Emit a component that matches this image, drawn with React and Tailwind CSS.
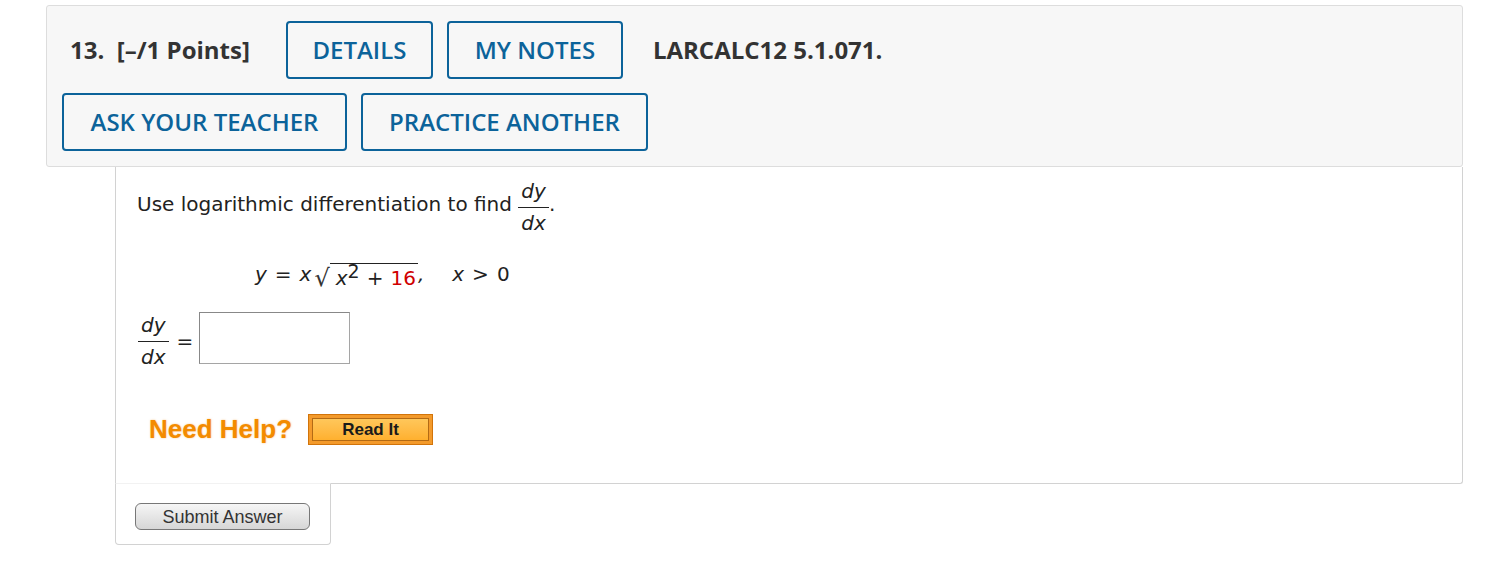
import React from 'react';

const Frac = ({ top, bottom, className = '' }) => (
  <span className={`inline-flex flex-col items-center italic ${className}`}>
    <span className="leading-[24px] pb-[4px] px-[3px]">{top}</span>
    <span className="block w-full h-px bg-[#222]"></span>
    <span className="leading-[24px] pt-[3px] px-[3px]">{bottom}</span>
  </span>
);

const BlueButton = ({ label, width }) => (
  <button
    className={`h-[58px] ${width} rounded-[4px] border-2 border-[#0c639a] bg-transparent text-[#0c639a] text-[24px] font-semibold`}
    style={{ fontFamily: '"Open Sans", sans-serif' }}
  >
    {label}
  </button>
);

const App = () => {
  return (
    <div className="w-[1488px] h-[562px] bg-white pt-[5px] pl-[46px]">
      {/* question header */}
      <div
        className="w-[1417px] h-[162px] bg-[#f7f7f7] border border-[#dddddd] rounded-[3px] pt-[15px] pl-[15px]"
        style={{ fontFamily: '"Open Sans", sans-serif' }}
      >
        <div className="flex items-center">
          <span className="ml-[8px] text-[24px] font-bold text-[#333] whitespace-pre">13.  [–/1 Points]</span>
          <div className="ml-[36px] flex gap-[14px]">
            <BlueButton label="DETAILS" width="w-[147px]" />
            <BlueButton label="MY NOTES" width="w-[176px]" />
          </div>
          <span className="ml-[30px] text-[24px] font-bold text-[#333]">LARCALC12 5.1.071.</span>
        </div>
        <div className="mt-[14px] flex gap-[14px]">
          <BlueButton label="ASK YOUR TEACHER" width="w-[285px]" />
          <BlueButton label="PRACTICE ANOTHER" width="w-[287px]" />
        </div>
      </div>

      {/* question body */}
      <div
        className="ml-[69px] w-[1348px] h-[317px] bg-white border-x border-b border-[#d2d2d2] rounded-br-[3px] pl-[21px] pt-[12px] text-[20px] text-[#222]"
        style={{ fontFamily: '"DejaVu Sans", Verdana, sans-serif' }}
      >
        <div className="flex items-center">
          <span className="-mt-[6px]">Use logarithmic differentiation to find&nbsp;</span>
          <Frac top="dy" bottom="dx" />
          <span className="-mt-[6px]">.</span>
        </div>

        <div className="mt-[24px] ml-[118px] flex items-center h-[30px]">
          <span className="italic">y</span>
          <span className="mx-[8px]">=</span>
          <span className="italic">x</span>
          <span className="ml-[3px] text-[24px] leading-[24px] translate-y-[4px] text-[#333]">√</span>
          <span className="border-t border-[#222] pt-[2px] pl-[6px] pr-[2px] leading-[24px] mt-[4px]">
            <span className="italic">x</span>
            <sup className="text-[19px] relative -top-[7px] align-baseline">2</sup>
            <span className="mx-[7px]">+</span>
            <span className="text-[#d00000]">16</span>
          </span>
          <span className="italic">,</span>
          <span className="ml-[28px] italic">x</span>
          <span className="mx-[8px]">&gt;</span>
          <span>0</span>
        </div>

        <div className="mt-[24px] flex items-start">
          <Frac top="dy" bottom="dx" className="ml-[1px]" />
          <span className="ml-[8px] self-center">=</span>
          <div className="ml-[6px] -mt-px w-[151px] h-[52px] border border-[#a5a5a5] border-l-[#888] border-t-[#888] bg-white"></div>
        </div>

        <div className="mt-[41px] ml-[12px] flex items-center" style={{ fontFamily: '"Liberation Sans", Arial, sans-serif' }}>
          <span className="text-[26px] font-bold text-[#f38b00] [text-shadow:0_0_2px_rgba(243,139,0,0.5)]">Need Help?</span>
          <div className="ml-[16px] w-[125px] h-[31px] bg-[#f39a2b] border border-[#d2740a] p-[3px]">
            <div className="w-full h-full border border-[#b36a14] bg-gradient-to-b from-[#ffc75a] to-[#ffb02e] flex items-center justify-center text-[17px] font-bold text-[#1a1a1a]">
              Read It
            </div>
          </div>
        </div>
      </div>

      {/* submit */}
      <div className="ml-[69px] -mt-px w-[216px] h-[62px] bg-white border-x border-b border-t border-t-[#f2f2f2] border-[#d2d2d2] rounded-b-[4px] pl-[19px] pt-[19px]">
        <button
          className="w-[175px] h-[27px] rounded-[6px] border border-[#777] bg-gradient-to-b from-[#f6f6f6] to-[#d6d6d6] text-[18px] text-[#333] leading-none"
          style={{ fontFamily: '"Liberation Sans", Arial, sans-serif' }}
        >
          Submit Answer
        </button>
      </div>
    </div>
  );
};

export default App;
